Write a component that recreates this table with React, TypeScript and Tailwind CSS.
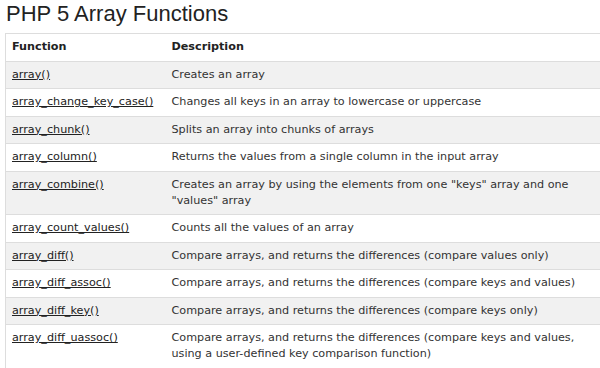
const rows: [string, string][] = [
  ["array()", "Creates an array"],
  ["array_change_key_case()", "Changes all keys in an array to lowercase or uppercase"],
  ["array_chunk()", "Splits an array into chunks of arrays"],
  ["array_column()", "Returns the values from a single column in the input array"],
  ["array_combine()", 'Creates an array by using the elements from one "keys" array and one "values" array'],
  ["array_count_values()", "Counts all the values of an array"],
  ["array_diff()", "Compare arrays, and returns the differences (compare values only)"],
  ["array_diff_assoc()", "Compare arrays, and returns the differences (compare keys and values)"],
  ["array_diff_key()", "Compare arrays, and returns the differences (compare keys only)"],
  ["array_diff_uassoc()", "Compare arrays, and returns the differences (compare keys and values, using a user-defined key comparison function)"],
];

const App = () => {
  return (
    <div className="w-[600px] h-[368px] overflow-hidden bg-white">
      <h2 className="pl-[6px] text-[22px] leading-[28px] text-[#222] font-normal" style={{ fontFamily: '"Liberation Sans", Arial, sans-serif' }}>
        PHP 5 Array Functions
      </h2>
      <table
        className="mt-[5px] ml-[5px] w-[600px] border-collapse border border-[#ddd] text-[11.2px] leading-[16px] text-[#333]"
        style={{ fontFamily: '"DejaVu Sans", Verdana, sans-serif' }}
      >
        <thead>
          <tr className="bg-white border-b border-[#ddd]">
            <th className="w-[160px] px-[6px] py-[5.25px] text-left font-bold text-[#222]">Function</th>
            <th className="px-[6px] pr-[12px] py-[5.25px] text-left font-bold text-[#222]">Description</th>
          </tr>
        </thead>
        <tbody>
          {rows.map(([fn, desc], i) => (
            <tr key={fn} className={i % 2 === 0 ? "bg-[#f1f1f1] border-b border-[#ddd]" : "bg-white border-b border-[#ddd]"}>
              <td className="align-top px-[6px] py-[5.25px]">
                <a href="#" className="underline text-[#222]">{fn}</a>
              </td>
              <td className="align-top px-[6px] pr-[12px] py-[5.25px]">{desc}</td>
            </tr>
          ))}
        </tbody>
      </table>
    </div>
  );
};

export default App;
